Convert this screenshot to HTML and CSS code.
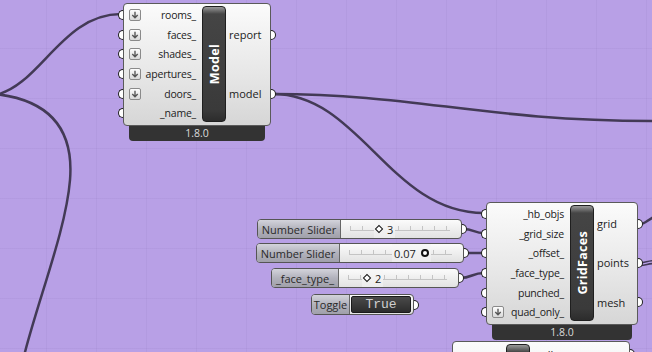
FILE: index.html
```html
<!DOCTYPE html>
<html>
<head>
    <meta charset="utf-8">
    <title>Honeybee canvas</title>
    <link rel="stylesheet" href="styles.css">
</head>
<body>
<div class="canvas">
    <svg class="wires" width="652" height="352" viewBox="0 0 652 352">
        <path d="M-5,95 C40,86 62,14 121,14"/>
        <path d="M-5,94 C50,100 74,130 70,180 C66,230 38,300 24,356"/>
        <path d="M273,94 C420,94 480,121 656,121"/>
        <path d="M273,94 C360,94 390,213 484,213"/>
        <path d="M463,229 C474,229 474,233 484,233"/>
        <path d="M465,253 L484,253"/>
        <path d="M460,278 C472,278 472,273 484,273"/>
        <path d="M640,224 C646,224 648,219 656,216"/>
        <path class="list" d="M640,264 C646,264 648,262 656,262"/>
        <path class="list-gap" d="M640,264 C646,264 648,262 656,262"/>
    </svg>

    <!-- Model component -->
    <div class="node model-node">
        <div class="node-body">
            <div class="ins">
                <div class="param"><span class="port in"></span><span class="arrow"><svg viewBox="0 0 11 11"><path d="M5.5 2v6.5M2.5 5.5l3 3 3-3"/></svg></span><span class="name">rooms_</span></div>
                <div class="param"><span class="port in"></span><span class="arrow"><svg viewBox="0 0 11 11"><path d="M5.5 2v6.5M2.5 5.5l3 3 3-3"/></svg></span><span class="name">faces_</span></div>
                <div class="param"><span class="port in"></span><span class="arrow"><svg viewBox="0 0 11 11"><path d="M5.5 2v6.5M2.5 5.5l3 3 3-3"/></svg></span><span class="name">shades_</span></div>
                <div class="param"><span class="port in"></span><span class="arrow"><svg viewBox="0 0 11 11"><path d="M5.5 2v6.5M2.5 5.5l3 3 3-3"/></svg></span><span class="name">apertures_</span></div>
                <div class="param"><span class="port in"></span><span class="arrow"><svg viewBox="0 0 11 11"><path d="M5.5 2v6.5M2.5 5.5l3 3 3-3"/></svg></span><span class="name">doors_</span></div>
                <div class="param"><span class="port in"></span><span class="name">_name_</span></div>
            </div>
            <div class="title-bar"><span>Model</span></div>
            <div class="outs">
                <div class="param"><span class="name">report</span><span class="port out"></span></div>
                <div class="param"><span class="name">model</span><span class="port out"></span></div>
            </div>
        </div>
        <div class="version">1.8.0</div>
    </div>

    <!-- GridFaces component -->
    <div class="node grid-node">
        <div class="node-body">
            <div class="ins">
                <div class="param"><span class="port in"></span><span class="name">_hb_objs</span></div>
                <div class="param"><span class="port in"></span><span class="name">_grid_size</span></div>
                <div class="param"><span class="port in"></span><span class="name">_offset_</span></div>
                <div class="param"><span class="port in"></span><span class="name">_face_type_</span></div>
                <div class="param"><span class="port in"></span><span class="name">punched_</span></div>
                <div class="param"><span class="port in"></span><span class="arrow"><svg viewBox="0 0 11 11"><path d="M5.5 2v6.5M2.5 5.5l3 3 3-3"/></svg></span><span class="name">quad_only_</span></div>
            </div>
            <div class="title-bar"><span>GridFaces</span></div>
            <div class="outs">
                <div class="param"><span class="name">grid</span><span class="port out"></span></div>
                <div class="param"><span class="name">points</span><span class="port out"></span></div>
                <div class="param"><span class="name">mesh</span><span class="port out"></span></div>
            </div>
        </div>
        <div class="version">1.8.0</div>
    </div>

    <!-- partly visible component at the bottom -->
    <div class="node walls-node">
        <div class="node-body">
            <div class="ins"></div>
            <div class="title-bar"><span></span></div>
            <div class="outs">
                <div class="param"><span class="name">walls</span><span class="port out"></span></div>
            </div>
        </div>
    </div>

    <!-- sliders -->
    <div class="slider slider-size">
        <div class="slider-label">Number Slider</div>
        <div class="slider-track">
            <div class="rail"></div>
            <div class="value value-size"><span class="grip diamond"></span>3</div>
        </div>
        <span class="port out"></span>
    </div>

    <div class="slider slider-offset">
        <div class="slider-label">Number Slider</div>
        <div class="slider-track">
            <div class="rail"></div>
            <div class="value value-offset">0.07<span class="grip circle"></span></div>
        </div>
        <span class="port out"></span>
    </div>

    <div class="slider slider-type">
        <div class="slider-label">_face_type_</div>
        <div class="slider-track">
            <div class="rail"></div>
            <div class="value value-type"><span class="grip diamond"></span>2</div>
        </div>
        <span class="port out"></span>
    </div>

    <div class="slider toggle">
        <div class="slider-label">Toggle</div>
        <div class="toggle-value">True</div>
        <span class="port out"></span>
    </div>
</div>
</body>
</html>
```

FILE: styles.css
```css
body {
    margin: 0;
    font-family: "Open Sans", "Noto Sans", sans-serif;
    font-size: 11px;
    color: #222;
}

.canvas {
    position: relative;
    width: 652px;
    height: 352px;
    overflow: hidden;
    background-color: #b8a0e6;
    background-image:
        linear-gradient(rgba(90, 60, 140, 0.06) 1px, transparent 1px),
        linear-gradient(90deg, rgba(90, 60, 140, 0.06) 1px, transparent 1px);
    background-size: 50px 50px;
    background-position: 46px 48px;
}

.wires {
    position: absolute;
    left: 0;
    top: 0;
}

.wires path {
    fill: none;
    stroke: #433a56;
    stroke-width: 2.5;
}

.wires path.list {
    stroke-width: 4.5;
}

.wires path.list-gap {
    stroke: #b8a0e6;
    stroke-width: 1.2;
}

/* components */

.node {
    position: absolute;
}

.model-node {
    left: 123px;
    top: 3px;
    width: 148px;
}

.grid-node {
    left: 486px;
    top: 202px;
    width: 152px;
}

.walls-node {
    left: 452px;
    top: 341px;
    width: 178px;
}

.node-body {
    display: flex;
    height: 123px;
    box-sizing: border-box;
    padding: 1px 0 2px;
    background: linear-gradient(#fbfbfb, #e6e6e6 60%, #d6d6d6);
    border: 1px solid #5a5a5a;
    border-radius: 4px;
}

.ins {
    display: flex;
    flex-direction: column;
    flex-shrink: 0;
}

.model-node .ins {
    width: 76px;
}

.grid-node .ins {
    width: 81px;
}

.walls-node .ins {
    width: 51px;
}

.param {
    position: relative;
    display: flex;
    align-items: center;
    height: 20px;
}

.name {
    white-space: nowrap;
}

.ins .param {
    justify-content: flex-end;
    padding-right: 4px;
}

.ins .name {
    font-size: 10.5px;
    letter-spacing: -0.2px;
}

.arrow {
    flex-shrink: 0;
    width: 12px;
    height: 12px;
    margin-left: 5px;
    margin-right: auto;
    box-sizing: border-box;
    border: 1px solid #8a8a8a;
    border-radius: 2px;
    background: linear-gradient(#fdfdfd, #d9d9d9);
}

.arrow svg {
    display: block;
    width: 10px;
    height: 10px;
}

.arrow path {
    fill: none;
    stroke: #555;
    stroke-width: 1.5;
}

.title-bar {
    flex-shrink: 0;
    width: 24px;
    margin: 1px 2px 1px;
    box-sizing: border-box;
    display: flex;
    align-items: center;
    justify-content: center;
    background: linear-gradient(#9a9a9a, #454545 7px, #3a3a3a 90%, #2c2c2c);
    border: 1px solid #1f1f1f;
    border-radius: 4px;
}

.title-bar span {
    writing-mode: vertical-rl;
    transform: rotate(180deg);
    color: #fff;
    font-weight: bold;
    font-size: 12.5px;
    letter-spacing: 0.3px;
}

.outs {
    display: flex;
    flex-direction: column;
    flex: 1;
}

.outs .param {
    flex: 1;
    padding-left: 1px;
}

.walls-node .outs .param {
    flex: none;
    margin-top: 1px;
}

.port {
    position: absolute;
    top: 50%;
    width: 4px;
    height: 8px;
    margin-top: -5px;
    background: #fff;
    border: 1.5px solid #1e1e1e;
}

.port.in {
    left: -6px;
    border-right: none;
    border-radius: 5px 0 0 5px;
}

.port.out {
    right: -6px;
    border-left: none;
    border-radius: 0 5px 5px 0;
}

.version {
    margin: 0 6px;
    height: 15px;
    line-height: 14px;
    text-align: center;
    color: #dcdcdc;
    font-size: 10.5px;
    background: #333;
    border-radius: 0 0 4px 4px;
}

/* sliders and toggle */

.slider {
    position: absolute;
    display: flex;
    box-sizing: border-box;
    border: 1px solid #555;
    border-radius: 4px;
    background: linear-gradient(#fbfbfb, #e2e2e2);
}

.slider-size {
    left: 257px;
    top: 219px;
    width: 205px;
    height: 20px;
}

.slider-offset {
    left: 256px;
    top: 243px;
    width: 208px;
    height: 20px;
}

.slider-type {
    left: 271px;
    top: 268px;
    width: 188px;
    height: 20px;
}

.toggle {
    left: 311px;
    top: 294px;
    width: 103px;
    height: 21px;
}

.slider-label {
    display: flex;
    align-items: center;
    justify-content: center;
    width: 82px;
    flex-shrink: 0;
    background: linear-gradient(#d3d3db, #b2b2bc 50%, #a0a0aa);
    border-right: 1px solid #666;
    border-radius: 3px 0 0 3px;
    color: #2a2a2a;
}

.slider-type .slider-label {
    width: 66px;
}

.toggle .slider-label {
    width: 37px;
}

.slider-track {
    position: relative;
    flex: 1;
}

.rail {
    position: absolute;
    left: 9px;
    right: 11px;
    top: 6px;
    height: 4px;
    border-bottom: 1px solid #c4c4c4;
    background: repeating-linear-gradient(90deg, #c4c4c4 0 1px, transparent 1px 12px);
}

.value {
    position: absolute;
    top: 0;
    height: 18px;
    display: flex;
    align-items: center;
    padding: 0 2px;
    background: linear-gradient(#f8f8f8, #ececec);
    color: #222;
}

.value-size {
    left: 33px;
}

.value-offset {
    left: 52px;
}

.value-type {
    left: 23px;
}

.grip {
    box-sizing: border-box;
    border: 1.5px solid #111;
    background: #fff;
}

.grip.diamond {
    width: 6px;
    height: 6px;
    margin-right: 5px;
    transform: rotate(45deg);
}

.grip.circle {
    width: 8px;
    height: 8px;
    margin-left: 5px;
    border-width: 2px;
    border-radius: 50%;
}

.toggle-value {
    flex: 1;
    margin: 1px 2px 1px 1px;
    display: flex;
    align-items: center;
    justify-content: center;
    background: linear-gradient(#4a4a4a, #2c2c2c);
    border: 1px solid #1a1a1a;
    border-radius: 2px;
    color: #d0d0d0;
    font-family: "Liberation Mono", "DejaVu Sans Mono", monospace;
    font-size: 13px;
}
```
